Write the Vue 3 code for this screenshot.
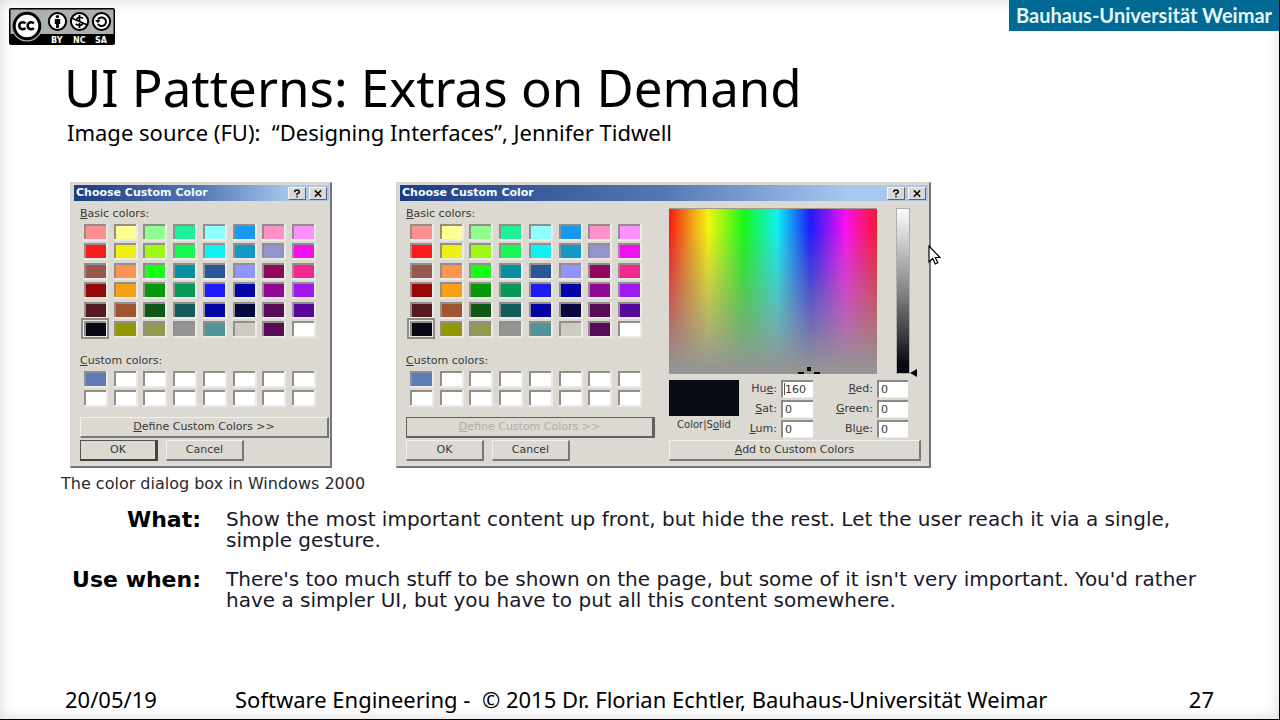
<script setup>
import { ref } from 'vue'

const basicColors = [
  '#ff9090', '#ffff90', '#90ff90', '#20f098', '#90ffff', '#1898f0', '#ff90c8', '#ff90ff',
  '#fa1c1c', '#f0f010', '#a0f818', '#18f850', '#10f0f0', '#1498c8', '#9494cc', '#f010f0',
  '#985850', '#ff9450', '#18ff18', '#0890a0', '#285898', '#9494ff', '#90085c', '#f02890',
  '#980808', '#f8a018', '#08980c', '#089858', '#1c1cf8', '#0404a8', '#900894', '#a018f0',
  '#581820', '#a05430', '#105818', '#145c58', '#0404a4', '#080840', '#580c58', '#580898',
  '#080814', '#949800', '#949850', '#949494', '#509498', '#ccccc4', '#580c58', '#ffffff'
]
const customColors = ['#5c7cb8', ...Array(15).fill('#ffffff')]

const dialogs = [
  { id: 'small', full: false },
  { id: 'full', full: true }
]

const fields = ref([
  { id: 'hue', pre: 'Hu', key: 'e', post: ':', value: '160' },
  { id: 'red', pre: '', key: 'R', post: 'ed:', value: '0' },
  { id: 'sat', pre: '', key: 'S', post: 'at:', value: '0' },
  { id: 'green', pre: '', key: 'G', post: 'reen:', value: '0' },
  { id: 'lum', pre: '', key: 'L', post: 'um:', value: '0' },
  { id: 'blue', pre: 'Bl', key: 'u', post: 'e:', value: '0' }
])
</script>

<template>
  <main class="slide">
    <header class="top">
      <svg class="license" viewBox="0 0 106 37" role="img" aria-label="Creative Commons BY NC SA">
        <rect x="0.75" y="0.75" width="104.5" height="35.5" rx="1.5" fill="#aab2ab" stroke="#000" stroke-width="1.5" />
        <rect x="1" y="26" width="104" height="10.5" fill="#000" />
        <circle cx="18" cy="18" r="15.5" fill="#aab2ab" />
        <circle cx="18" cy="18" r="12.8" fill="#fff" stroke="#000" stroke-width="3" />
        <g fill="none" stroke="#000" stroke-width="2.6">
          <path d="M16.4 15.4A3.5 3.5 0 1 0 16.4 20" />
          <path d="M24.8 15.4A3.5 3.5 0 1 0 24.8 20" />
        </g>
        <g fill="#fff" stroke="#000" stroke-width="2">
          <circle cx="48.500" cy="13.500" r="8.600" />
          <circle cx="70.500" cy="13.500" r="8.600" />
          <circle cx="92.500" cy="13.500" r="8.600" />
        </g>
        <circle cx="48.500" cy="8.600" r="1.700" />
        <path d="M45.800 11h5.400v5h-1.300v4h-2.800v-4h-1.300z" />
        <path d="M62.500 10l16 7M74 10.500c-1.500-2-6-1.500-6 .9M73.500 15c.3 3-5 3.200-6.700.8M70.500 7v13" fill="none" stroke="#000" stroke-width="1.700" />
        <path d="M89 11.500a4.300 4.300 0 1 1 0 4.400" fill="none" stroke="#000" stroke-width="2" />
        <path d="M86 12h5.600l-2.800 3.200z" />
        <g class="license-text" fill="#fff">
          <text x="42" y="34.500">BY</text>
          <text x="64" y="34.500">NC</text>
          <text x="86" y="34.500">SA</text>
        </g>
      </svg>
      <div class="brand">Bauhaus-Universität Weimar</div>
    </header>

    <section class="heading">
      <h1>UI Patterns: Extras on Demand</h1>
      <p>Image source (FU):&nbsp; “Designing Interfaces”, Jennifer Tidwell</p>
    </section>

    <section class="figure">
      <div class="dialogs">
        <form v-for="d in dialogs" :key="d.id" class="dialog" @submit.prevent>
          <div class="titlebar">
            <span class="title">Choose Custom Color</span>
            <button type="button" class="tool" aria-label="Help">
              <svg viewBox="0 0 10 10"><path d="M2.500 3.500V2.500L3.500 1.500H6.500L7.500 2.500V4L5 5.500V7M5 8v1.500" fill="none" stroke="#111" stroke-width="1.700" /></svg>
            </button>
            <button type="button" class="tool" aria-label="Close">
              <svg viewBox="0 0 10 10"><path d="M1.500 1.500l7 7M8.500 1.500l-7 7" fill="none" stroke="#111" stroke-width="1.700" /></svg>
            </button>
          </div>
          <div class="content">
            <div class="palette">
              <p class="group"><u>B</u>asic colors:</p>
              <div class="swatches basic">
                <button
                  v-for="(c, i) in basicColors" :key="i" type="button" class="swatch"
                  :class="{ chosen: i === 40 }" :aria-label="c" :style="{ backgroundColor: c }"
                ></button>
              </div>
              <p class="group custom"><u>C</u>ustom colors:</p>
              <div class="swatches">
                <button
                  v-for="(c, i) in customColors" :key="i" type="button" class="swatch"
                  :aria-label="c" :style="{ backgroundColor: c }"
                ></button>
              </div>
              <button type="button" class="push define" :disabled="d.full"><u>D</u>efine Custom Colors &gt;&gt;</button>
              <div class="actions">
                <button type="submit" class="push" :class="{ primary: !d.full }">OK</button>
                <button type="button" class="push">Cancel</button>
              </div>
            </div>

            <div v-if="d.full" class="mixer">
              <div class="pickers">
                <div class="spectrum">
                  <svg class="cross" viewBox="0 0 22 8"><path d="M9 1h4v4H9zM0 6h6v2H0zM16 6h6v2h-6z" /></svg>
                </div>
                <div class="ramp"></div>
                <svg class="pointer" viewBox="0 0 7 8"><path d="M0 4l7-4v8z" /></svg>
              </div>
              <div class="values">
                <div class="preview">
                  <div class="sample"></div>
                  <span>Color|S<u>o</u>lid</span>
                </div>
                <div class="fields">
                  <template v-for="f in fields" :key="f.id">
                    <label :for="f.id">{{ f.pre }}<u>{{ f.key }}</u>{{ f.post }}</label>
                    <input :id="f.id" v-model="f.value" type="text" :class="{ caret: f.id === 'hue' }" />
                  </template>
                </div>
              </div>
              <button type="button" class="push add"><u>A</u>dd to Custom Colors</button>
            </div>
          </div>
          <svg v-if="d.full" class="cursor" viewBox="0 0 13 20">
            <path d="M1 1v16l3.700-3.500 2.600 5.500 2.500-1.200-2.500-5.300H12z" fill="#fff" stroke="#000" stroke-width="1.200" />
          </svg>
        </form>
      </div>
      <p class="caption">The color dialog box in Windows 2000</p>
    </section>

    <dl class="notes">
      <dt>What:</dt>
      <dd>Show the most important content up front, but hide the rest. Let the user reach it via a single,<br />simple gesture.</dd>
      <dt>Use when:</dt>
      <dd>There's too much stuff to be shown on the page, but some of it isn't very important. You'd rather<br />have a simpler UI, but you have to put all this content somewhere.</dd>
    </dl>

    <footer class="foot">
      <span>20/05/19</span>
      <span>Software Engineering -&nbsp; © 2015 Dr. Florian Echtler, Bauhaus-Universität Weimar</span>
      <span>27</span>
    </footer>
  </main>
</template>

<style>
body { margin: 0; }
</style>

<style scoped>
* { box-sizing: border-box; }
p, h1, dl, dd { margin: 0; }
.slide {
  min-height: 100vh;
  display: flex;
  flex-direction: column;
  background: #fff;
  border-right: 1px solid #000;
  border-bottom: 1px solid #000;
  box-shadow: inset 0 0 14px 1px #dcdcdc;
  color: #000;
  font-family: "Noto Sans", sans-serif;
}
.top { display: flex; justify-content: space-between; align-items: flex-start; height: 58px; }
.license { width: 106px; height: 37px; margin: 8px 0 0 9px; }
.license-text { font: bold 8px "DejaVu Sans", sans-serif; }
.brand {
  width: 270px;
  height: 31px;
  background: #006a94;
  color: #e4f6fa;
  font: bold 20px/31px Lato, sans-serif;
  text-align: center;
  white-space: nowrap;
}
.heading { padding: 0 64px; }
h1 { font-size: 51px; font-weight: 400; line-height: 59px; white-space: nowrap; }
.heading p { font-size: 22px; line-height: 30px; padding-left: 3px; }

.figure { padding: 35px 61px 0; }
.dialogs { display: flex; align-items: stretch; gap: 64px; padding-left: 9px; }
.dialog {
  position: relative;
  height: 286px;
  padding: 2px 1px 4px 3px;
  background: #dcd9d2;
  border: 1px solid #d4d1ca;
  border-right: 2px solid #74747a;
  border-bottom: 2px solid #74747a;
  color: #38383a;
  font: 11px/14px "DejaVu Sans", sans-serif;
}
.titlebar {
  display: flex;
  align-items: center;
  gap: 3px;
  height: 16px;
  padding: 0 2px;
  background: linear-gradient(90deg, #1c3c80, #5478b4 50%, #a8c8f0 85%);
}
.title { flex: 1; color: #f4f8ff; font-weight: bold; }
.tool {
  display: grid;
  place-items: center;
  width: 18px;
  height: 13px;
  padding: 0;
  background: #dcd9d2;
  border: 1px solid #f4f4f0;
  border-right-color: #606068;
  border-bottom-color: #606068;
}
.tool svg { width: 10px; height: 9px; }
.content { display: flex; gap: 14px; padding: 5px 0 0 6px; }
.palette { width: 249px; }
.group { height: 16px; line-height: 16px; }
.custom { margin-top: 17px; }
.swatches {
  display: grid;
  grid-template-columns: repeat(8, 22px);
  row-gap: 4px;
  justify-content: space-between;
  width: 230px;
  margin: 2px 0 0 4px;
}
.basic { height: 112px; row-gap: 0; align-content: space-between; }
.swatch {
  height: 15px;
  padding: 0;
  border: 0;
  border-top: 2px solid #918e8b;
  border-left: 2px solid #918e8b;
  box-shadow: 1px 1px 0 1px #eceae5;
}
.chosen { box-shadow: 0 0 0 1px #eceae5, 0 0 0 3px #8c8c88; }
.push {
  display: block;
  height: 21px;
  padding: 0;
  background: #dcd9d2;
  border: 1px solid #f2f0ec;
  border-right: 2px solid #77777a;
  border-bottom: 2px solid #77777a;
  color: #38383a;
  font: inherit;
}
.push:disabled { color: #b0aea8; border: 1px solid #606060; border-right-width: 3px; border-bottom-width: 2px; }
.define { width: 249px; margin-top: 12px; }
.actions { display: flex; gap: 8px; margin-top: 2px; }
.actions .push { width: 78px; }
.primary { border: 1px solid #55554f; border-right: 3px solid #44443e; border-bottom: 2px solid #44443e; }

.mixer { width: 252px; padding: 2px 0 0; margin-right: 7px; }
.pickers { display: flex; align-items: flex-end; }
.spectrum {
  display: flex;
  align-items: flex-end;
  width: 208px;
  height: 166px;
  padding-left: 129px;
  background:
    linear-gradient(180deg, rgba(148, 148, 148, 0) 12%, #949494 97%),
    linear-gradient(90deg, #f81818, #f0a018 11%, #f4f410 19%, #18f818 36%, #10f0f0 52%, #1c1cf8 68%, #f810f0 85%, #f81830);
  border-top: 1px solid #a09890;
}
.cross { width: 22px; height: 8px; }
.ramp {
  width: 14px;
  height: 166px;
  margin-left: 19px;
  border: 1px solid #b0aea8;
  background: linear-gradient(180deg, #fcfcfc, #808080 52%, #080814 95%);
}
.pointer { width: 7px; height: 8px; margin-bottom: -3px; }
.values { display: flex; justify-content: space-between; height: 58px; margin-top: 6px; padding-right: 13px; }
.preview { width: 70px; text-align: center; white-space: nowrap; }
.sample { height: 36px; margin-bottom: 2px; background: #080a14; }
.preview span { font-size: 10px; }
.fields { display: grid; grid-template-columns: 32px 32px 56px 31px; grid-auto-rows: 18px; gap: 2px 4px; text-align: right; }
.fields label { line-height: 18px; font-size: 11px; }
.fields input {
  width: 100%;
  height: 18px;
  padding: 0 2px;
  background: #fff;
  border: 0;
  border-top: 2px solid #8c8a86;
  border-left: 2px solid #8c8a86;
  border-bottom: 1px solid #efede8;
  color: #38383a;
  font: inherit;
}
.fields .caret { background: linear-gradient(#555, #555) 1px 1px / 1px 12px no-repeat #fff; }
.add { width: 252px; margin-top: 2px; }
.cursor { position: absolute; top: 62px; right: -12px; width: 13px; height: 20px; }

.caption { margin-top: 6px; color: #28282c; font: 16px/20px "DejaVu Sans", Arial, sans-serif; }
.notes {
  display: grid;
  grid-template-columns: 140px 1fr;
  column-gap: 25px;
  row-gap: 18px;
  margin-top: 15px;
  padding-left: 61px;
  color: #181828;
  font: 20px/21px "DejaVu Sans", Arial, sans-serif;
  white-space: nowrap;
}
dt { font-size: 22px; font-weight: bold; color: #000; text-align: right; }
.foot {
  display: grid;
  grid-template-columns: 170px 1fr auto;
  margin-top: auto;
  padding: 0 65px 5px;
  font-size: 22px;
  line-height: 30px;
  white-space: nowrap;
}
</style>
